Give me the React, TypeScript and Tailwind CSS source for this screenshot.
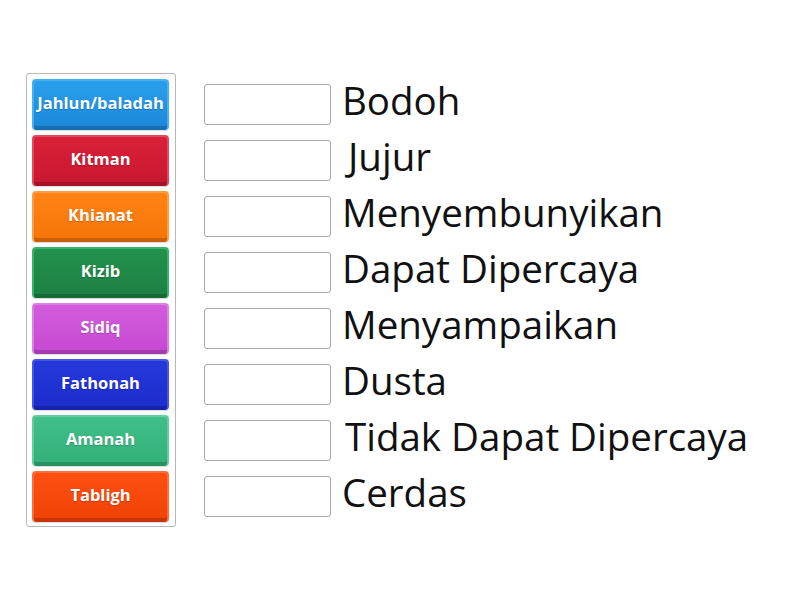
import React from "react";

type Tile = { label: string; from: string; to: string; edge: string };

const tiles: Tile[] = [
  { label: "Jahlun/baladah", from: "from-[#2aa0ec]", to: "to-[#1c86d8]", edge: "border-[#45b0f2]" },
  { label: "Kitman", from: "from-[#da2039]", to: "to-[#c8172f]", edge: "border-[#e24a5d]" },
  { label: "Khianat", from: "from-[#ff8414]", to: "to-[#f57408]", edge: "border-[#ff9c45]" },
  { label: "Kizib", from: "from-[#22924d]", to: "to-[#1c8043]", edge: "border-[#38b46a]" },
  { label: "Sidiq", from: "from-[#d25cdc]", to: "to-[#c648d2]", edge: "border-[#de7fe6]" },
  { label: "Fathonah", from: "from-[#2538da]", to: "to-[#1d2ccc]", edge: "border-[#4657e6]" },
  { label: "Amanah", from: "from-[#40bf88]", to: "to-[#33b078]", edge: "border-[#62cd9d]" },
  { label: "Tabligh", from: "from-[#fc4f10]", to: "to-[#f04205]", edge: "border-[#ff6e3a]" },
];

const answers = [
  "Bodoh",
  "Jujur",
  "Menyembunyikan",
  "Dapat Dipercaya",
  "Menyampaikan",
  "Dusta",
  "Tidak Dapat Dipercaya",
  "Cerdas",
];

const TileButton = ({ tile }: { tile: Tile }) => (
  <div
    className={`h-[51px] w-[137px] flex items-center justify-center rounded-[4px] border-2 border-b-0 ${tile.edge} bg-gradient-to-b ${tile.from} ${tile.to} shadow-[inset_0_-4px_0_rgba(0,0,0,0.18),0_1px_1px_rgba(0,0,0,0.15)]`}
  >
    <span className="text-[16.5px] font-bold text-white whitespace-nowrap [text-shadow:0_1px_1px_rgba(0,0,0,0.2)] pb-[5px]">
      {tile.label}
    </span>
  </div>
);

export default function App() {
  return (
    <div
      className="w-[800px] h-[600px] bg-white flex items-start pt-[73px] pl-[26px]"
      style={{ fontFamily: '"Open Sans", "Noto Sans", sans-serif' }}
    >
      {/* Draggable tiles */}
      <div className="border border-[#b8b8b8] rounded-[3px] pt-[5px] pl-[5px] pr-[6px] pb-[4px] flex flex-col gap-[5px]">
        {tiles.map((t) => (
          <TileButton key={t.label} tile={t} />
        ))}
      </div>

      {/* Targets */}
      <div className="ml-[28px] pt-[6px] flex flex-col gap-[5px]">
        {answers.map((a, i) => (
          <div key={a} className="h-[51px] flex items-center">
            <div className="w-[127px] h-[41px] border border-[#a8a8a8] rounded-[3px] bg-white" />
            <span
              className={`text-[38.5px] leading-none text-[#111] whitespace-nowrap pb-[9px] ${
                i === 1 ? "ml-[17px]" : i === 6 ? "ml-[14px]" : "ml-[11px]"
              }`}
            >
              {a}
            </span>
          </div>
        ))}
      </div>
    </div>
  );
}
